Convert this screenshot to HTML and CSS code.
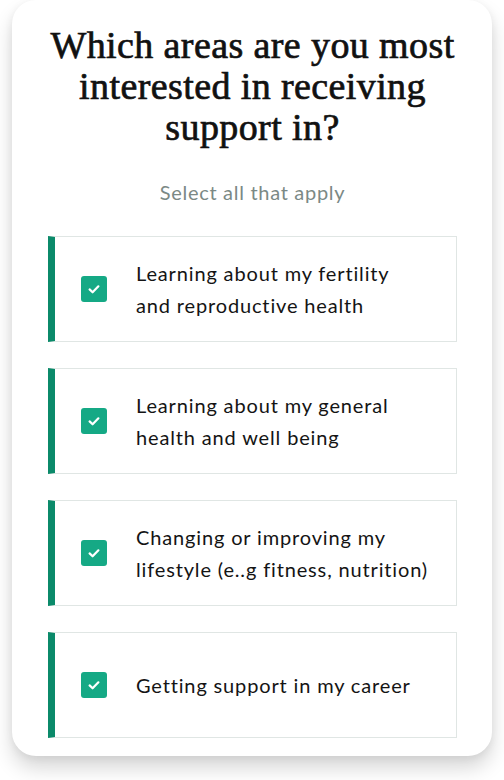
FILE: index.html
```html
<!DOCTYPE html>
<html>
<head>
<meta charset="utf-8">
<link rel="stylesheet" href="styles.css">
</head>
<body>
<div class="card">
  <h1 class="title">Which areas are you most<br>interested in receiving<br>support in?</h1>
  <p class="subtitle">Select all that apply</p>
  <div class="options">
    <div class="option">
      <span class="check"><svg viewBox="0 0 26 26" width="26" height="26"><path d="M8.6 13.4l3 2.9 5.8-6" fill="none" stroke="#fff" stroke-width="2.2" stroke-linecap="round" stroke-linejoin="round"/></svg></span>
      <span class="label">Learning about my fertility<br>and reproductive health</span>
    </div>
    <div class="option">
      <span class="check"><svg viewBox="0 0 26 26" width="26" height="26"><path d="M8.6 13.4l3 2.9 5.8-6" fill="none" stroke="#fff" stroke-width="2.2" stroke-linecap="round" stroke-linejoin="round"/></svg></span>
      <span class="label">Learning about my general<br>health and well being</span>
    </div>
    <div class="option">
      <span class="check"><svg viewBox="0 0 26 26" width="26" height="26"><path d="M8.6 13.4l3 2.9 5.8-6" fill="none" stroke="#fff" stroke-width="2.2" stroke-linecap="round" stroke-linejoin="round"/></svg></span>
      <span class="label">Changing or improving my<br>lifestyle (e..g fitness, nutrition)</span>
    </div>
    <div class="option">
      <span class="check"><svg viewBox="0 0 26 26" width="26" height="26"><path d="M8.6 13.4l3 2.9 5.8-6" fill="none" stroke="#fff" stroke-width="2.2" stroke-linecap="round" stroke-linejoin="round"/></svg></span>
      <span class="label">Getting support in my career</span>
    </div>
  </div>
</div>
</body>
</html>
```
FILE: styles.css
```css
html, body {
  margin: 0;
  padding: 0;
  background: #ffffff;
}
body {
  padding: 0 12px;
  height: 780px;
  overflow: hidden;
}
.card {
  width: 480px;
  height: 756px;
  box-sizing: border-box;
  background: #ffffff;
  border-radius: 24px;
  box-shadow: 0 12px 20px rgba(0, 0, 0, 0.16), 0 2px 8px rgba(0, 0, 0, 0.06);
  padding: 25px 35px 0 36px;
}
.title {
  margin: 0;
  font-family: "Liberation Serif", "Times New Roman", serif;
  font-weight: normal;
  -webkit-text-stroke: 0.7px #111;
  font-size: 38px;
  line-height: 41px;
  letter-spacing: 0.4px;
  color: #111111;
  text-align: center;
  white-space: nowrap;
}
.subtitle {
  margin: 32px 0 0;
  font-family: Lato, "Noto Sans", sans-serif;
  font-size: 20px;
  line-height: 24px;
  color: #7b8985;
  text-align: center;
  letter-spacing: 0.7px;
}
.options {
  margin-top: 32px;
  display: flex;
  flex-direction: column;
  gap: 26px;
}
.option {
  height: 106px;
  box-sizing: border-box;
  border: 1px solid #e0e6e4;
  border-left: 7px solid #0b8a6a;
  display: flex;
  align-items: center;
  padding-left: 26px;
}
.check {
  width: 26px;
  height: 26px;
  flex: none;
  background: #15a985;
  border-radius: 3px;
  display: block;
}
.check svg {
  display: block;
}
.label {
  margin-left: 29px;
  font-family: Lato, "Noto Sans", sans-serif;
  font-size: 20px;
  line-height: 32px;
  color: #141414;
  letter-spacing: 0.85px;
  white-space: nowrap;
}
```
